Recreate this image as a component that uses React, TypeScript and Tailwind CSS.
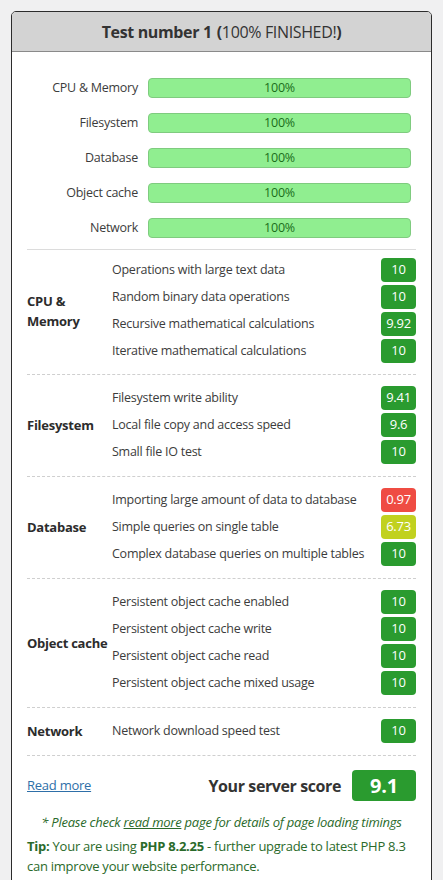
import React from "react";

type Score = { name: string; value: string; tone: "good" | "bad" | "mid" };

const BARS = ["CPU & Memory", "Filesystem", "Database", "Object cache", "Network"];

const SECTIONS: { title: React.ReactNode; items: Score[] }[] = [
  {
    title: (
      <>
        CPU &amp;
        <br />
        Memory
      </>
    ),
    items: [
      { name: "Operations with large text data", value: "10", tone: "good" },
      { name: "Random binary data operations", value: "10", tone: "good" },
      { name: "Recursive mathematical calculations", value: "9.92", tone: "good" },
      { name: "Iterative mathematical calculations", value: "10", tone: "good" },
    ],
  },
  {
    title: "Filesystem",
    items: [
      { name: "Filesystem write ability", value: "9.41", tone: "good" },
      { name: "Local file copy and access speed", value: "9.6", tone: "good" },
      { name: "Small file IO test", value: "10", tone: "good" },
    ],
  },
  {
    title: "Database",
    items: [
      { name: "Importing large amount of data to database", value: "0.97", tone: "bad" },
      { name: "Simple queries on single table", value: "6.73", tone: "mid" },
      { name: "Complex database queries on multiple tables", value: "10", tone: "good" },
    ],
  },
  {
    title: "Object cache",
    items: [
      { name: "Persistent object cache enabled", value: "10", tone: "good" },
      { name: "Persistent object cache write", value: "10", tone: "good" },
      { name: "Persistent object cache read", value: "10", tone: "good" },
      { name: "Persistent object cache mixed usage", value: "10", tone: "good" },
    ],
  },
  {
    title: "Network",
    items: [{ name: "Network download speed test", value: "10", tone: "good" }],
  },
];

const TONE = {
  good: "bg-[#2a9b2f]",
  bad: "bg-[#ef4c43]",
  mid: "bg-[#c1d11f]",
};

function Badge({ value, tone }: { value: string; tone: Score["tone"] }) {
  return (
    <span
      className={`flex h-[24px] w-[35px] shrink-0 items-center justify-center rounded-[4px] text-[13px] text-white ${TONE[tone]}`}
    >
      {value}
    </span>
  );
}

export default function App() {
  return (
    <div
      className="h-[880px] overflow-hidden bg-[#f0f0f1] px-[11px] pt-[11px] tracking-[-0.25px] text-[#3c3c3c]"
      style={{ fontFamily: '"Open Sans", "Noto Sans", sans-serif' }}
    >
      <div className="min-h-[900px] rounded-t-[5px] border border-[#2c2c2c] bg-white">
        <div className="flex h-[40px] items-center justify-center rounded-t-[4px] border-b border-[#8a8a8a] bg-[#d3d3d3] text-[16px] tracking-[-0.35px] text-[#333]">
          <span className="font-bold">Test number 1</span>
          <span className="ml-[5px]">
            <b>(</b>100% FINISHED!<b>)</b>
          </span>
        </div>

        <div className="px-[15px]">
          {/* progress */}
          <div className="flex flex-col gap-[15px] pb-[11px] pt-[26px]">
            {BARS.map((b) => (
              <div key={b} className="flex items-center">
                <span className="w-[121px] pr-[10px] text-right text-[12.5px]">{b}</span>
                <div className="mr-[5px] flex h-[20px] flex-1 items-center justify-center rounded-[4px] border border-[#7fcb7f] bg-[#90ee90] text-[12.5px] text-[#1b6e1b]">
                  100%
                </div>
              </div>
            ))}
          </div>

          <div className="border-t border-[#dcdcdc]" />

          {SECTIONS.map((s, i) => (
            <div
              key={i}
              className={`flex items-center border-b border-dashed border-[#cfcfcf] ${
                i === 0 ? "pb-[11px] pt-[8px]" : "pb-[12px] pt-[11px]"
              }`}
            >
              <div className="w-[85px] text-[13px] font-bold leading-[20px] text-[#2c2c2c]">
                {s.title}
              </div>
              <div className="flex flex-1 flex-col gap-[3px]">
                {s.items.map((it) => (
                  <div key={it.name} className="flex items-center justify-between">
                    <span className="text-[12.5px]">{it.name}</span>
                    <Badge value={it.value} tone={it.tone} />
                  </div>
                ))}
              </div>
            </div>
          ))}

          <div className="flex items-center justify-between pt-[14px]">
            <a href="#" className="text-[13px] text-[#2e6fa8] underline">
              Read more
            </a>
            <div className="flex items-center gap-[11px]">
              <span className="text-[16px] font-bold tracking-[-0.4px] text-[#333]">
                Your server score
              </span>
              <span className="flex h-[31px] w-[64px] items-center justify-center rounded-[4px] bg-[#2a9b2f] text-[20px] font-bold text-white">
                9.1
              </span>
            </div>
          </div>

          <p className="mt-[11px] text-center text-[13px] italic leading-[20px] text-[#2a6a2a]">
            * Please check{" "}
            <a href="#" className="underline">
              read more
            </a>{" "}
            page for details of page loading timings
          </p>
          <p className="mt-[4px] text-[13px] leading-[20px] text-[#2a6a2a]">
            <b>Tip:</b> Your are using <b>PHP 8.2.25</b> - further upgrade to latest PHP 8.3
            can improve your website performance.
          </p>
        </div>
      </div>
    </div>
  );
}
